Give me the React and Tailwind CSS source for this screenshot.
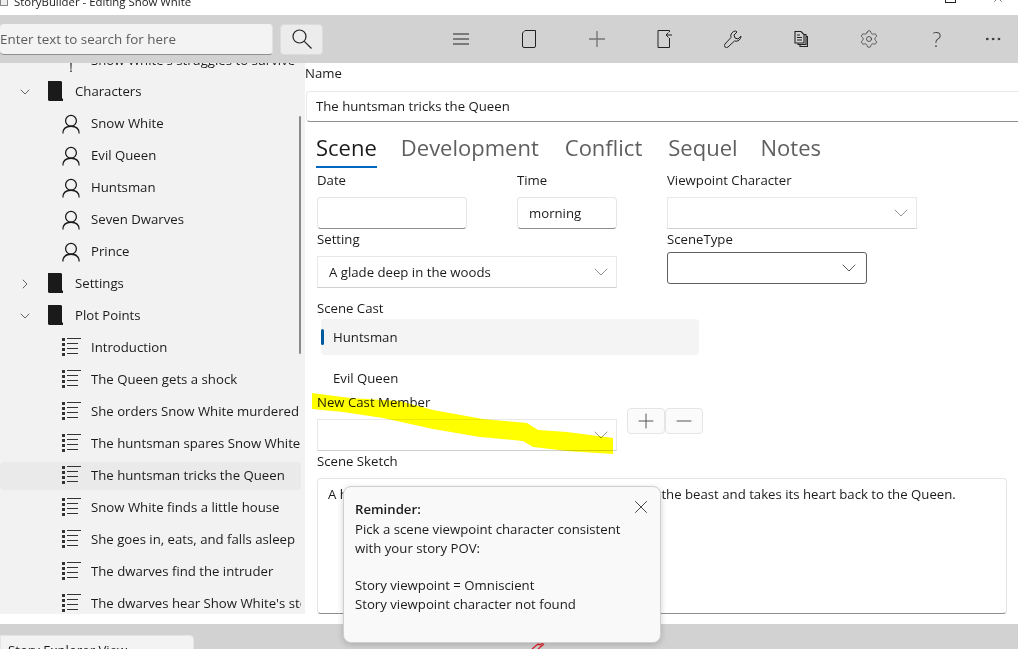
import React from "react";
import { X, ChevronDown, ChevronRight, Plus, Minus, Settings, MoreHorizontal } from "lucide-react";

const Person = () => (
  <svg width="18" height="20" viewBox="0 0 20 22" fill="none" stroke="#1a1a1a" strokeWidth="1.4" className="shrink-0 ml-px">
    <circle cx="10" cy="7.500" r="6" />
    <path d="M1 21.500c0-5 3.500-8 9-8s9 3 9 8" />
  </svg>
);
const ListIcon = () => (
  <svg width="21" height="20" viewBox="0 0 21 20" fill="none" className="shrink-0 mb-[2px]">
    <g fill="#333"><rect x="1" y="1" width="3" height="3" /><rect x="1" y="6" width="3" height="3" /><rect x="1" y="11" width="3" height="3" /><rect x="1" y="16" width="3" height="3" /></g>
    <g stroke="#333" strokeWidth="1"><path d="M6 1.500h14M6 6.500h11M6 11.500h11M6 16.500h11" /></g>
  </svg>
);
const Book = () => (
  <svg width="16" height="20" viewBox="0 0 16 20" className="shrink-0 mb-[2px]">
    <path d="M0 0h13l1 1v16l1 1v2H1l-1-1z" fill="#1a1a1a" />
  </svg>
);

const Folder = ({ name, open }) => (
  <div className="h-8 flex items-center text-[#1b1b1b]">
    <span className="w-12 pl-[17px] flex items-center">
      {open ? <ChevronDown size={16} strokeWidth={1} /> : <ChevronRight size={16} strokeWidth={1} />}
    </span>
    <Book />
    <span className="ml-[11px]">{name}</span>
  </div>
);
const Leaf = ({ name, icon, sel, gap = "ml-[11px]" }) => (
  <div className="h-8 flex items-center">
    <div className={`h-7 w-[301px] flex items-center pl-[61px] whitespace-nowrap overflow-hidden rounded ${sel ? "bg-[#eaeaea]" : ""}`}>
      {icon}
      <span className={gap}>{name}</span>
    </div>
  </div>
);

const Label = ({ children }) => <div className="h-5 leading-5 whitespace-nowrap">{children}</div>;
const Input = ({ w, children, className = "" }) => (
  <div className={`${w} h-8 pt-px bg-white border border-[#e5e5e5] border-b-[#8f8f8f] rounded flex items-center px-[11px] ${className}`}>{children}</div>
);
const Combo = ({ w, children }) => (
  <div className={`${w} h-8 bg-white border border-[#e8e8e8] border-b-[#cfcfcf] flex items-center justify-between pl-[11px] pr-[3px]`}>
    <span className="pt-px">{children}</span>
    <ChevronDown size={24} strokeWidth={0.7} color="#666" />
  </div>
);

const TabItem = ({ name, active, ml }) => (
  <div className={`${ml} flex flex-col`}>
    <span className={`h-8 leading-[30px] text-[22px] ${active ? "text-[#1a1a1a]" : "text-[#5f5f5f]"}`}>{name}</span>
    <span className={`mt-[2px] h-[2px] ${active ? "bg-[#0067c0]" : ""}`} />
  </div>
);

export default function App() {
  const tool = "w-[68px] flex justify-center items-center shrink-0";
  return (
    <div className="relative w-[1018px] h-[649px] overflow-hidden bg-white font-['Open_Sans','Liberation_Sans',sans-serif] text-[13.2px] text-[#1b1b1b]">
      {/* Title bar */}
      <div className="h-[15px] flex items-start justify-between overflow-hidden">
        <div className="flex items-center h-[15px] -mt-[6px]">
          <span className="w-2 h-2 border border-[#888] bg-[#eee] mr-[6px]" />
          <span className="text-[11.4px] leading-[15px] whitespace-nowrap">StoryBuilder - Editing Snow White</span>
        </div>
        <div className="flex items-center h-[15px] -mt-[10px] pr-[13px] gap-[35px]">
          <span className="w-[11px] h-[11px] border border-[#222]" />
          <X size={14} strokeWidth={1} />
        </div>
      </div>

      {/* Toolbar */}
      <div className="h-[48px] bg-[#d2d2d2] flex items-center">
        <div className="w-[273px] shrink-0 h-[31px] pt-px bg-[#f3f3f3] border-b border-b-[#8f8f8f] border-r border-r-[#e2e2e2] rounded flex items-center text-[#5c5c5c] text-[13.4px]">
          Enter text to search for here
        </div>
        <div className="ml-[7px] w-[43px] shrink-0 h-[31px] bg-[#ececec] border border-[#dcdcdc] rounded flex items-center justify-center">
          <svg width="22" height="22" viewBox="0 0 22 22" fill="none" stroke="#222" strokeWidth="1.2"><circle cx="8.500" cy="8.500" r="6.500" /><path d="M13.300 13.300l7.200 7.200" /></svg>
        </div>
        <div className="ml-[104px] flex items-center">
          <span className={tool}><svg width="18" height="12" viewBox="0 0 18 12" stroke="#222" strokeWidth="1"><path d="M1 1h16M1 6h16M1 11h16" /></svg></span>
          <span className={tool}><svg width="14" height="18" viewBox="0 0 14 18" fill="none" stroke="#222" strokeWidth="1"><path d="M3 .5h10.500v15.500a1.500 1.500 0 0 1-1.500 1.500H2A1.500 1.500 0 0 1 .5 16V3z" /></svg></span>
          <span className={tool}><svg width="18" height="18" viewBox="0 0 18 18" stroke="#777" strokeWidth="1.4"><path d="M9 1v16M1 9h16" /></svg></span>
          <span className={tool}><svg width="16" height="18" viewBox="0 0 16 18" fill="none" stroke="#222" strokeWidth="1"><path d="M12.500 2V.5H1v17h11.500V8M15 5H9M11.500 2.500L9 5l2.500 2.500" /></svg></span>
          <span className={tool}><svg width="18" height="18" viewBox="0 0 18 18" fill="none" stroke="#222" strokeWidth="1"><path d="M11.500 1a5 5 0 0 0-4.500 6.500L1 14a2.100 2.100 0 0 0 3 3l6.500-6a5 5 0 0 0 6.500-5l-3 3-3-1-1-3 3-3z" /></svg></span>
          <span className={tool}><svg width="14" height="16" viewBox="0 0 14 16" fill="none" stroke="#222" strokeWidth="1.1"><path d="M1 .5h6l3 3v8.500H1zM10 3.500h2v10H4V12M12.500 5.500h1v10H6V14M3 4h3M3 6.500h5M3 9h5" /></svg></span>
          <span className={tool}><Settings size={20} strokeWidth={0.9} color="#333" /></span>
          <span className={`${tool} text-[#444] text-[21px] leading-none font-light`}>?</span>
          <span className="w-[44px] flex justify-center shrink-0"><MoreHorizontal size={20} strokeWidth={1.2} color="#222" /></span>
        </div>
      </div>

      {/* Main */}
      <div className="h-[551px] flex">
        <div className="relative w-[305px] h-[551px] bg-[#f2f2f2] overflow-hidden shrink-0">
          <div className="-mt-[19px] w-[305px]">
            <Leaf name="Snow White's struggles to survive" gap="ml-[10px] pt-[2px]" icon={<span className="w-5 text-center shrink-0 pt-4">!</span>} />
            <Folder name="Characters" open />
            <Leaf name="Snow White" icon={<Person />} />
            <Leaf name="Evil Queen" icon={<Person />} />
            <Leaf name="Huntsman" icon={<Person />} />
            <Leaf name="Seven Dwarves" icon={<Person />} />
            <Leaf name="Prince" icon={<Person />} />
            <Folder name="Settings" />
            <Folder name="Plot Points" open />
            <Leaf name="Introduction" gap="ml-[9px]" icon={<ListIcon />} />
            <Leaf name="The Queen gets a shock" gap="ml-[9px]" icon={<ListIcon />} />
            <Leaf name="She orders Snow White murdered" gap="ml-[9px]" icon={<ListIcon />} />
            <Leaf name="The huntsman spares Snow White" gap="ml-[9px]" icon={<ListIcon />} />
            <Leaf name="The huntsman tricks the Queen" gap="ml-[9px]" icon={<ListIcon />} sel />
            <Leaf name="Snow White finds a little house" gap="ml-[9px]" icon={<ListIcon />} />
            <Leaf name="She goes in, eats, and falls asleep" gap="ml-[9px]" icon={<ListIcon />} />
            <Leaf name="The dwarves find the intruder" gap="ml-[9px]" icon={<ListIcon />} />
            <Leaf name="The dwarves hear Show White's story" gap="ml-[9px]" icon={<ListIcon />} />
          </div>
          <div className="absolute left-[299px] top-[53px] w-[2px] h-[238px] bg-[#8a8a8a] rounded" />
        </div>

        <div className="flex-1 min-w-0">
          <div className="h-7 leading-5">Name</div>
          <div className="ml-px w-[712px] h-[31px] border border-[#e8e8e8] border-b-[#8f8f8f] border-r-0 rounded-l flex items-center pl-[9px]">The huntsman tricks the Queen</div>
          <div className="flex h-[46px] pt-[10px] pl-[11px]">
            <TabItem name="Scene" active />
            <TabItem name="Development" ml="ml-[24px]" />
            <TabItem name="Conflict" ml="ml-[26px]" />
            <TabItem name="Sequel" ml="ml-[26px]" />
            <TabItem name="Notes" ml="ml-[23px]" />
          </div>
          <div className="pl-3">
            <div className="flex h-[61px] pt-[2px]">
              <div className="w-[200px]"><Label>Date</Label><Input w="w-[150px]" className="mt-[7px]" /></div>
              <div className="w-[150px]"><Label>Time</Label><Input w="w-[100px]" className="mt-[7px]">morning</Input></div>
              <div><Label>Viewpoint Character</Label><div className="mt-[7px]"><Combo w="w-[250px]" /></div></div>
            </div>
            <div className="flex h-[59px]">
              <div className="w-[350px]"><Label>Setting</Label><div className="mt-[7px]"><Combo w="w-[300px]">A glade deep in the woods</Combo></div></div>
              <div>
                <Label>SceneType</Label>
                <div className="mt-[3px] w-[200px] h-8 border border-[#5f5f5f] rounded-[3px] bg-white flex items-center justify-end pr-[5px]"><ChevronDown size={24} strokeWidth={0.8} color="#333" /></div>
              </div>
            </div>
            <div className="mt-[10px]"><Label>Scene Cast</Label></div>
            <div className="ml-1 w-[378px] h-[36px] mt-px bg-[#f4f4f4] rounded flex items-center">
              <span className="w-[3px] h-4 bg-[#005a9e] rounded-sm" />
              <span className="ml-[9px] pt-[2px]">Huntsman</span>
            </div>
            <div className="ml-4 h-[37px] pt-[13px] leading-5">Evil Queen</div>
            <div className="flex h-[59px]">
              <div className="w-[310px]"><Label>New Cast Member</Label><div className="mt-[7px]"><Combo w="w-[300px]" /></div></div>
              <div className="pt-4 flex">
                <div className="w-[38px] h-[26px] bg-[#fbfbfb] border border-[#e5e5e5] rounded flex items-center justify-center"><Plus size={24} strokeWidth={1} color="#555" /></div>
                <div className="w-[38px] h-[26px] bg-[#fbfbfb] border border-[#e5e5e5] rounded flex items-center justify-center"><Minus size={24} strokeWidth={1} color="#555" /></div>
              </div>
            </div>
            <Label>Scene Sketch</Label>
            <div className="mt-[7px] w-[690px] h-[136px] border border-[#e5e5e5] border-b-[#8f8f8f] rounded px-[10px] pt-[6px] whitespace-nowrap">A huntsman carries Snow White to the woods but kills the beast and takes its heart back to the Queen.</div>
          </div>
        </div>
      </div>

      <div className="h-[10px] bg-white" />

      {/* Bottom bar */}
      <div className="h-[25px] bg-[#d2d2d2] overflow-hidden pt-[11px]">
        <div className="w-[194px] h-[30px] bg-[#f3f3f3] border border-[#e5e5e5] rounded-tr flex items-start justify-between pl-[7px] pr-[12px] pt-[5px] whitespace-nowrap">
          <span>Story Explorer View</span>
          <ChevronDown size={16} strokeWidth={1} className="mt-[3px]" />
        </div>
      </div>

      {/* Highlighter scribble */}
      <svg className="absolute left-0 top-0 mix-blend-multiply pointer-events-none" width="1018" height="649">
        <polygon fill="#ffff00" points="312,393 350,398 400,401 433,410 483,419 527,423 538,430 567,432 613,438 613,454 567,451 533,447 523,441 480,437 433,429 383,418 343,412 312,409" />
      </svg>
      {/* red mark */}
      <svg className="absolute left-[530px] top-[640px]" width="20" height="9" viewBox="0 0 20 9" fill="none" stroke="#e0282e" strokeWidth="1.4">
        <path d="M2 9l6-5 2 1 5-4M8 9l6-5" />
      </svg>

      {/* Popup */}
      <div className="absolute left-[343px] top-[486px] w-[318px] h-[157px] bg-[#f9f9f9] border border-[#cfcfcf] rounded-lg shadow-[0_2px_6px_rgba(0,0,0,0.18)] pl-[11px] pt-[13px]">
        <div className="font-semibold leading-[19px]">Reminder:</div>
        <div className="leading-[18.7px] mt-px">Pick a scene viewpoint character consistent<br />with your story POV:<br /><br />Story viewpoint = Omniscient<br />Story viewpoint character not found</div>
        <X size={22} strokeWidth={0.9} className="absolute right-[8px] top-[9px]" color="#222" />
      </div>
    </div>
  );
}
